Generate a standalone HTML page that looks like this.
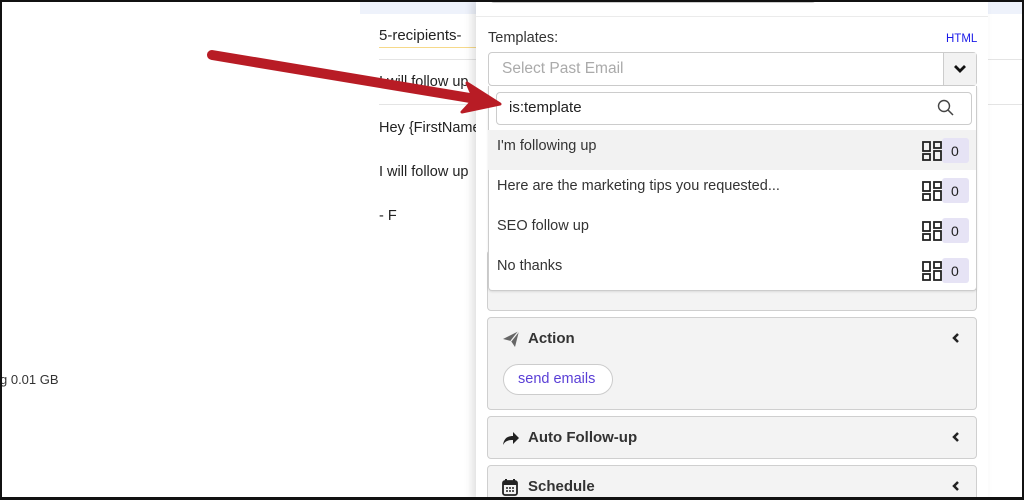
<!DOCTYPE html>
<html style="width:1024px;height:500px;overflow:hidden"><head><style>
*{box-sizing:border-box;margin:0;padding:0}
body{width:1024px;height:500px;overflow:hidden;background:#fff;font-family:"Liberation Sans",Arial,sans-serif;position:relative;color:#222}
.a{position:absolute}
.row{position:absolute;left:488px;width:488px;height:40px;font-size:14.5px;color:#333;padding:8px 0 0 9px}
.ic{position:absolute;left:434px;top:11px}
.bd{position:absolute;left:454px;top:8px;width:27px;height:25px;background:#e6e3f5;border-radius:3px;font-size:14px;padding:5px 0 0 9px;color:#222}
.card{position:absolute;left:487px;width:490px;background:#f3f3f3;border:1px solid #cfcfcf;border-radius:4px}
.ct{position:absolute;left:40px;font-weight:bold;font-size:15px;color:#333}
.chev{position:absolute;right:16px}
</style></head><body>
<div class="a" style="left:360px;top:0;width:116px;height:14px;background:#eef2fb"></div>
<div class="a" style="left:379px;top:27px;font-size:15px;color:#222;white-space:nowrap">5-recipients-</div>
<div class="a" style="left:379px;top:47px;width:97px;height:1px;background:#f6d98a"></div>
<div class="a" style="left:379px;top:59px;width:97px;height:1px;background:#e4e4e4"></div>
<div class="a" style="left:379px;top:74px;font-size:14.5px;white-space:nowrap">I will follow up</div>
<div class="a" style="left:379px;top:104px;width:97px;height:1px;background:#e4e4e4"></div>
<div class="a" style="left:379px;top:120px;font-size:14.5px;white-space:nowrap">Hey {FirstName</div>
<div class="a" style="left:379px;top:164px;font-size:14.5px;white-space:nowrap">I will follow up</div>
<div class="a" style="left:379px;top:208px;font-size:14.5px">- F</div>
<div class="a" style="left:0;top:372px;font-size:13px;color:#333">g 0.01 GB</div>
<div class="a" style="left:988px;top:0;width:36px;height:14px;background:#eef2fb"></div>
<div class="a" style="left:988px;top:59px;width:36px;height:1px;background:#e4e4e4"></div>
<div class="a" style="left:988px;top:104px;width:36px;height:1px;background:#e4e4e4"></div>
<!-- panel -->
<div class="a" style="left:476px;top:0;width:512px;height:500px;background:#fff;box-shadow:-4px 0 8px rgba(0,0,0,.12)"></div>
<div class="a" style="left:490px;top:-10px;width:326px;height:13px;border:1px solid #ccc;border-radius:4px"></div>
<div class="a" style="left:476px;top:16px;width:512px;height:1px;background:#ebebeb"></div>
<div class="a" style="left:488px;top:30px;font-size:14.5px;color:#333">Templates:</div>
<div class="a" style="left:946px;top:33px;font-size:11.5px;color:#1a1ae8">HTML</div>
<div class="a" style="left:488px;top:52px;width:489px;height:34px;border:1px solid #ccc;border-radius:4px"></div>
<div class="a" style="left:502px;top:60px;font-size:15.5px;color:#aaa">Select Past Email</div>
<div class="a" style="left:943px;top:53px;width:33px;height:32px;background:#f2f2f2;border-left:1px solid #ccc"></div>
<svg class="a" style="left:953px;top:64px" width="14" height="10"><path d="M2 2l5 5 5-5" stroke="#111" stroke-width="2.8" fill="none"/></svg>
<!-- section behind -->
<div class="card" style="top:250px;height:61px"></div>
<div class="card" style="top:317px;height:93px">
<svg class="a" style="left:14px;top:12px" width="18" height="18"><path d="M1 9L17 1 13 17 9 11 Z" fill="#666"/><path d="M9 11l8-10" stroke="#f3f3f3" stroke-width="1.3"/></svg>
<div class="ct" style="top:12px">Action</div><svg class="chev" style="top:14px" width="8" height="12"><path d="M6 2L2 6l4 4" stroke="#222" stroke-width="2.5" fill="none"/></svg>
<div class="a" style="left:15px;top:46px;width:110px;height:31px;border:1px solid #ccc;border-radius:16px;background:#fff;color:#5a3fd6;font-size:14.5px;padding:6px 0 0 14px">send emails</div>
</div>
<div class="card" style="top:416px;height:43px">
<svg class="a" style="left:14px;top:13px" width="18" height="16"><path d="M1 15C2 8 6 6 11 6V2l6 6-6 6V10C6 10 3 11 1 15Z" fill="#222"/></svg>
<div class="ct" style="top:12px">Auto Follow-up</div><svg class="chev" style="top:14px" width="8" height="12"><path d="M6 2L2 6l4 4" stroke="#222" stroke-width="2.5" fill="none"/></svg>
</div>
<div class="card" style="top:465px;height:50px">
<svg class="a" style="left:14px;top:12px" width="16" height="18"><rect x="1" y="3" width="14" height="14" rx="2" fill="none" stroke="#222" stroke-width="1.8"/><rect x="1" y="3" width="14" height="4" fill="#222"/><path d="M4 1v3M12 1v3" stroke="#222" stroke-width="2"/><path d="M4 10h2M7 10h2M10 10h2M4 13h2M7 13h2M10 13h2" stroke="#222" stroke-width="1.5"/></svg>
<div class="ct" style="top:12px">Schedule</div><svg class="chev" style="top:14px" width="8" height="12"><path d="M6 2L2 6l4 4" stroke="#222" stroke-width="2.5" fill="none"/></svg>
</div>
<!-- dropdown -->
<div class="a" style="left:488px;top:86px;width:489px;height:205px;background:#fff;border:1px solid #ccc;border-top:none;border-radius:0 0 4px 4px;box-shadow:0 1px 2px rgba(0,0,0,.1)"></div>
<div class="a" style="left:496px;top:92px;width:476px;height:33px;border:1px solid #ccc;border-radius:4px"></div>
<div class="a" style="left:509px;top:99px;font-size:15px;color:#222">is:template</div>
<svg class="a" style="left:937px;top:99px" width="18" height="18"><circle cx="7" cy="7" r="5.5" fill="none" stroke="#444" stroke-width="1.4"/><path d="M11 11l5 5" stroke="#444" stroke-width="1.5"/></svg>
<div class="row" style="top:130px;background:#f2f2f2">I'm following up<svg class="ic" width="20" height="20"><g fill="none" stroke="#222" stroke-width="1.8"><rect x="1" y="1" width="7" height="9"/><rect x="12" y="1" width="7" height="6"/><rect x="1" y="13" width="7" height="6"/><rect x="12" y="10" width="7" height="9"/></g></svg><div class="bd">0</div></div>
<div class="row" style="top:170px">Here are the marketing tips you requested...<svg class="ic" width="20" height="20"><g fill="none" stroke="#222" stroke-width="1.8"><rect x="1" y="1" width="7" height="9"/><rect x="12" y="1" width="7" height="6"/><rect x="1" y="13" width="7" height="6"/><rect x="12" y="10" width="7" height="9"/></g></svg><div class="bd">0</div></div>
<div class="row" style="top:210px">SEO follow up<svg class="ic" width="20" height="20"><g fill="none" stroke="#222" stroke-width="1.8"><rect x="1" y="1" width="7" height="9"/><rect x="12" y="1" width="7" height="6"/><rect x="1" y="13" width="7" height="6"/><rect x="12" y="10" width="7" height="9"/></g></svg><div class="bd">0</div></div>
<div class="row" style="top:250px">No thanks<svg class="ic" width="20" height="20"><g fill="none" stroke="#222" stroke-width="1.8"><rect x="1" y="1" width="7" height="9"/><rect x="12" y="1" width="7" height="6"/><rect x="1" y="13" width="7" height="6"/><rect x="12" y="10" width="7" height="9"/></g></svg><div class="bd">0</div></div>
<!-- arrow -->
<svg class="a" style="left:0;top:0" width="1024" height="500"><line x1="212" y1="55" x2="470" y2="98" stroke="#b81c25" stroke-width="10" stroke-linecap="round"/><path d="M500 104L467 83 474 99 462 112Z" fill="#b81c25" stroke="#b81c25" stroke-width="3" stroke-linejoin="round"/></svg>
<div class="a" style="left:0;top:0;width:1024px;height:500px;border:2px solid #111;border-bottom-width:3px"></div>
</body></html>
